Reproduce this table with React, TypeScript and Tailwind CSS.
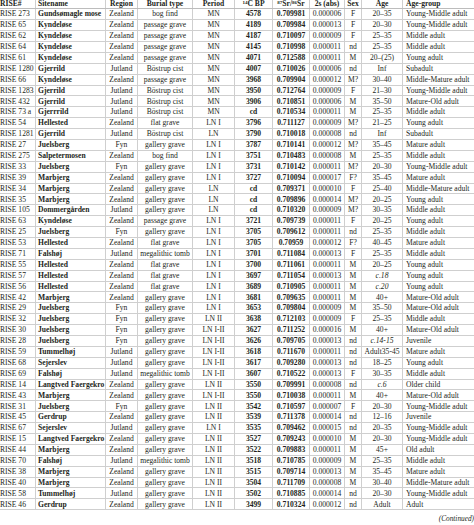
import React from "react";

type Row = [string, string, string, string, string, string, string, string, string, string, string];

const rows: Row[] = [
  ["RISE 273", "Gundsømagle mose", "Zealand", "bog find", "MN", "4578", "0.709981", "0.000006", "F", "20–35", "Young-Middle adult"],
  ["RISE 65", "Kyndeløse", "Zealand", "passage grave", "MN", "4189", "0.709984", "0.000013", "F", "20–30", "Young-Middle adult"],
  ["RISE 62", "Kyndeløse", "Zealand", "passage grave", "MN", "4187", "0.710097", "0.000009", "F", "25–35", "Middle adult"],
  ["RISE 64", "Kyndeløse", "Zealand", "passage grave", "MN", "4145", "0.710998", "0.000011", "nd", "25–35", "Middle adult"],
  ["RISE 61", "Kyndeløse", "Zealand", "passage grave", "MN", "4071", "0.712588", "0.000011", "M", "20–(25)", "Young adult"],
  ["RISE 1280", "Gjerrild", "Jutland", "Böstrup cist", "MN", "4007", "0.710026", "0.000006", "nd", "Inf", "Subadult"],
  ["RISE 66", "Kyndeløse", "Zealand", "passage grave", "MN", "3968", "0.709904", "0.000012", "M?", "30–40", "Middle-Mature adult"],
  ["RISE 1283", "Gjerrild", "Jutland", "Böstrup cist", "MN", "3950", "0.712764", "0.000009", "F", "21–30", "Young-Middle adult"],
  ["RISE 432", "Gjerrild", "Jutland", "Böstrup cist", "MN", "3906", "0.710851", "0.000006", "M", "35–50", "Mature-Old adult"],
  ["RISE 73 a", "Gjerrrild", "Jutland", "Böstrup cist", "MN", "cd", "0.710534", "0.000011", "M", "25–35", "Middle adult"],
  ["RISE 54", "Hellested", "Zealand", "flat grave", "LN I", "3796", "0.711127", "0.000009", "M?", "21–25", "Young adult"],
  ["RISE 1281", "Gjerrild", "Jutland", "Böstrup cist", "LN", "3790", "0.710018", "0.000008", "nd", "Inf", "Subadult"],
  ["RISE 27", "Juelsberg", "Fyn", "gallery grave", "LN I", "3787", "0.710141", "0.000012", "M?", "35–45", "Mature adult"],
  ["RISE 275", "Salpetermosen", "Zealand", "bog find", "LN I", "3751", "0.710483", "0.000008", "M", "25–35", "Middle adult"],
  ["RISE 33", "Juelsberg", "Fyn", "gallery grave", "LN I", "3731", "0.710142", "0.000011", "M?", "20–30", "Young-Middle adult"],
  ["RISE 39", "Marbjerg", "Zealand", "gallery grave", "LN I", "3727", "0.710094", "0.000017", "F?", "35–45", "Mature adult"],
  ["RISE 34", "Marbjerg", "Zealand", "gallery grave", "LN", "cd", "0.709371", "0.000010", "F", "25–40", "Middle-Mature adult"],
  ["RISE 35", "Marbjerg", "Zealand", "gallery grave", "LN", "cd", "0.709896", "0.000014", "M?", "20–25", "Young adult"],
  ["RISE 105", "Dommergården", "Jutland", "gallery grave", "LN", "cd", "0.710320", "0.000009", "M?", "30–35", "Middle adult"],
  ["RISE 63", "Kyndeløse", "Zealand", "passage grave", "LN I", "3721", "0.709739", "0.000011", "F", "20–25", "Young adult"],
  ["RISE 25", "Juelsberg", "Fyn", "gallery grave", "LN I", "3705", "0.709612", "0.000011", "nd", "25–35", "Middle adult"],
  ["RISE 53", "Hellested", "Zealand", "flat grave", "LN I", "3705", "0.70959", "0.000012", "F?", "40–45", "Mature adult"],
  ["RISE 71", "Falshøj", "Jutland", "megalithic tomb", "LN I", "3701", "0.711084", "0.000013", "F", "25–35", "Middle adult"],
  ["RISE 55", "Hellested", "Zealand", "flat grave", "LN I", "3700", "0.711061", "0.000011", "M", "20–25", "Young adult"],
  ["RISE 57", "Hellested", "Zealand", "flat grave", "LN I", "3697", "0.711054", "0.000013", "M", "c.18", "Young adult"],
  ["RISE 56", "Hellested", "Zealand", "flat grave", "LN I", "3689", "0.710905", "0.000011", "M", "c.20", "Young adult"],
  ["RISE 42", "Marbjerg", "Zealand", "gallery grave", "LN I", "3681", "0.709635", "0.000011", "M", "40+", "Mature-Old adult"],
  ["RISE 29", "Juelsberg", "Fyn", "gallery grave", "LN I", "3653", "0.709804", "0.000009", "M", "35–50", "Mature-Old adult"],
  ["RISE 32", "Juelsberg", "Fyn", "gallery grave", "LN II", "3638", "0.712103", "0.000009", "F", "25–35", "Middle adult"],
  ["RISE 30", "Juelsberg", "Fyn", "gallery grave", "LN I-II", "3627", "0.711252", "0.000016", "M", "40+", "Mature-Old adult"],
  ["RISE 28", "Juelsberg", "Fyn", "gallery grave", "LN I-II", "3626", "0.709705", "0.000013", "nd", "c.14-15", "Juvenile"],
  ["RISE 59", "Tummelhøj", "Jutland", "gallery grave", "LN I-II", "3618", "0.711670", "0.000011", "nd", "Adult35-45", "Mature adult"],
  ["RISE 68", "Sejerslev", "Jutland", "gallery grave", "LN I-II", "3617", "0.709280", "0.000013", "nd", "18–25", "Young adult"],
  ["RISE 69", "Falshøj", "Jutland", "megalithic tomb", "LN I-II", "3607", "0.710522", "0.000013", "F", "30–35", "Middle adult"],
  ["RISE 14", "Langtved Faergekro", "Zealand", "gallery grave", "LN II", "3550", "0.709991", "0.000008", "nd", "c.6", "Older child"],
  ["RISE 43", "Marbjerg", "Zealand", "gallery grave", "LN I-II", "3550", "0.710038", "0.000011", "M", "40+", "Mature-Old adult"],
  ["RISE 31", "Juelsberg", "Fyn", "gallery grave", "LN II", "3542", "0.710597", "0.000007", "F", "20–30", "Young-Middle adult"],
  ["RISE 45", "Gerdrup", "Zealand", "gallery grave", "LN II", "3539", "0.711378", "0.000014", "nd", "12–16", "Juvenile"],
  ["RISE 67", "Sejerslev", "Jutland", "gallery grave", "LN I", "3535", "0.709462", "0.000015", "nd", "20–35", "Young-Middle adult"],
  ["RISE 15", "Langtved Faergekro", "Zealand", "gallery grave", "LN II", "3527", "0.709243", "0.000010", "M", "20–30", "Young-Middle adult"],
  ["RISE 44", "Marbjerg", "Zealand", "gallery grave", "LN II", "3522", "0.709883", "0.000011", "M", "45+", "Old adult"],
  ["RISE 70", "Falshøj", "Jutland", "megalithic tomb", "LN II", "3518", "0.710785", "0.000009", "M", "25–35", "Middle adult"],
  ["RISE 38", "Marbjerg", "Zealand", "gallery grave", "LN II", "3515", "0.709714", "0.000013", "M", "35–45", "Mature adult"],
  ["RISE 40", "Marbjerg", "Zealand", "gallery grave", "LN II", "3504", "0.711709", "0.000008", "M", "30–40", "Middle-Mature adult"],
  ["RISE 58", "Tummelhøj", "Jutland", "gallery grave", "LN II", "3502", "0.710885", "0.000014", "nd", "20–30", "Young-Middle adult"],
  ["RISE 46", "Gerdrup", "Zealand", "gallery grave", "LN II", "3499", "0.710324", "0.000012", "nd", "Adult", "Adult"],
];

const cellBase = "flex items-center overflow-hidden whitespace-nowrap border-r border-[#cfcfcf]";

const colClass = [
  "justify-start pl-0",
  "justify-start pl-[2px] font-bold",
  "justify-center",
  "justify-center",
  "justify-center",
  "justify-center font-bold",
  "justify-center font-bold",
  "justify-center",
  "justify-center",
  "justify-center",
  "justify-start pl-[3px] border-r-0",
];

const headClass = [
  "justify-start pl-0",
  "justify-start pl-[2px]",
  "justify-center",
  "justify-center",
  "justify-center",
  "justify-center",
  "justify-center",
  "justify-center",
  "justify-center",
  "justify-center",
  "justify-start pl-[3px] border-r-0",
];

const gridCols =
  "grid grid-cols-[36px_70px_32px_55px_42px_38px_37px_35px_17px_41px_71px]";

function AgeText({ v }: { v: string }) {
  if (v.startsWith("c.")) return <span className="italic">{v}</span>;
  return <>{v}</>;
}

export default function App() {
  const headers: React.ReactNode[] = [
    "RISE#",
    "Sitename",
    "Region",
    "Burial type",
    "Period",
    <span key="c">
      <sup className="text-[5px]">14</sup>C BP
    </span>,
    <span key="s">
      <sup className="text-[5px]">87</sup>Sr/<sup className="text-[5px]">86</sup>Sr
    </span>,
    "2s (abs)",
    "Sex",
    "Age",
    "Age-group",
  ];

  return (
    <div className="w-[474px] h-[525px] overflow-hidden bg-white text-[#231f20] font-['Liberation_Serif','Times_New_Roman',serif] text-[7.6px] leading-none">
      <div className="flex flex-col">
        <div className={`${gridCols} h-[9.3px] border-b border-[#bcbcbc] font-bold`}>
          {headers.map((h, i) => (
            <div key={i} className={`${cellBase} ${headClass[i]}`}>
              {h}
            </div>
          ))}
        </div>
        {rows.map((r, ri) => (
          <div key={ri} className={`${gridCols} h-[10.9px] border-b border-[#cfcfcf]`}>
            {r.map((c, ci) => (
              <div key={ci} className={`${cellBase} ${colClass[ci]}`}>
                {ci === 9 ? <AgeText v={c} /> : c}
              </div>
            ))}
          </div>
        ))}
        <div className="flex justify-end pt-[5px]">
          <span className="italic text-[7.3px]">(Continued)</span>
        </div>
      </div>
    </div>
  );
}
